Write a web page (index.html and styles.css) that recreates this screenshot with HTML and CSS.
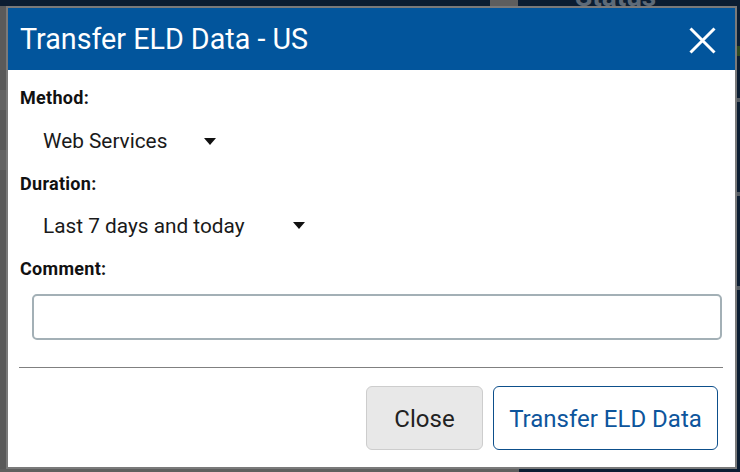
FILE: index.html
```html
<!DOCTYPE html>
<html lang="en">
<head>
<meta charset="utf-8">
<title>Transfer ELD Data - US</title>
<link rel="stylesheet" href="styles.css">
</head>
<body>
<div class="app">
  <div class="app-top">
    <span class="app-top-btn"></span>
    <span class="app-top-title">Status</span>
  </div>
  <div class="app-main">
    <div class="app-left">
      <div class="app-left-row"></div>
      <div class="app-left-row"></div>
    </div>
    <div class="app-right">
      <div class="app-right-line green"></div>
      <div class="app-right-line"></div>
      <div class="app-right-line"></div>
      <div class="app-right-line"></div>
    </div>
  </div>
  <div class="app-bottom">
    <div class="app-bottom-left"></div>
    <div class="app-bottom-right"></div>
  </div>
</div>

<div class="modal" role="dialog" aria-label="Transfer ELD Data - US">
  <div class="modal-header">
    <h1 class="modal-title">Transfer ELD Data - US</h1>
    <button class="modal-x" aria-label="Close">
      <svg width="27" height="27" viewBox="0 0 27 27"><path d="M1.5 1.5 L25.5 25.5 M25.5 1.5 L1.5 25.5" stroke="#fff" stroke-width="3" fill="none"/></svg>
    </button>
  </div>
  <div class="modal-body">
    <div class="field-label">Method:</div>
    <div class="select-row">
      <span class="select-value">Web Services</span>
      <span class="caret caret-method"></span>
    </div>
    <div class="field-label">Duration:</div>
    <div class="select-row select-row-2">
      <span class="select-value">Last 7 days and today</span>
      <span class="caret caret-duration"></span>
    </div>
    <div class="field-label">Comment:</div>
    <input class="comment-input" type="text">
    <hr class="divider">
    <div class="actions">
      <button class="btn btn-close">Close</button>
      <button class="btn btn-primary">Transfer ELD Data</button>
    </div>
  </div>
</div>
</body>
</html>
```
FILE: styles.css
```css
* { box-sizing: border-box; }
html, body {
  margin: 0;
  padding: 0;
  width: 740px;
  height: 472px;
  overflow: hidden;
  font-family: Roboto, "Liberation Sans", Arial, sans-serif;
  background: #0b1d32;
}

/* dimmed application behind the dialog */
.app {
  display: flex;
  flex-direction: column;
  width: 740px;
  height: 472px;
}
.app-top {
  height: 6px;
  background: #0b1d32;
  position: relative;
  overflow: hidden;
}
.app-top-btn {
  position: absolute;
  left: 490px;
  top: 0;
  width: 28px;
  height: 6px;
  background: #5e5e5e;
}
.app-top-title {
  position: absolute;
  left: 575px;
  top: -20px;
  font-size: 28px;
  font-weight: 700;
  color: #5d6a78;
}
.app-main {
  flex: 1;
  display: flex;
}
.app-left {
  width: 520px;
  background: #5a5a5a;
  display: flex;
  flex-direction: column;
  padding-top: 84px;
  gap: 40px;
}
.app-left-row {
  height: 20px;
  background: #626262;
}
.app-right {
  flex: 1;
  background: #0b1d32;
  display: flex;
  flex-direction: column;
  padding-top: 40px;
}
.app-right-line {
  height: 4px;
  background: #555c63;
  margin-bottom: 90px;
}
.app-right-line.green {
  height: 10px;
  background: #2f4a22;
  margin-bottom: 42px;
}
.app-bottom {
  height: 3px;
  display: flex;
}
.app-bottom-left { width: 519px; background: #5f5f5f; }
.app-bottom-right { flex: 1; background: #0b1d32; }

/* dialog */
.modal {
  position: absolute;
  left: 6px;
  top: 6px;
  width: 731px;
  height: 463px;
  border: 2px solid #7a7a7a;
  background: #fff;
  display: flex;
  flex-direction: column;
}
.modal-header {
  height: 62px;
  background: #02559c;
  display: flex;
  align-items: center;
  justify-content: space-between;
  padding: 0 19px 0 12px;
}
.modal-title {
  margin: 0;
  font-size: 28.7px;
  font-weight: 400;
  color: #fff;
  line-height: 34px;
}
.modal-x {
  border: 0;
  background: transparent;
  padding: 0;
  width: 27px;
  height: 27px;
  display: block;
  margin-top: 2px;
}
.modal-x svg { display: block; }

.modal-body {
  flex: 1;
  display: flex;
  flex-direction: column;
  padding: 18px 12px 17px 11px;
}
.field-label {
  font-size: 18px;
  font-weight: 700;
  line-height: 20px;
  letter-spacing: 0.3px;
  color: #111;
  padding-left: 1px;
}
.select-row {
  height: 66px;
  display: flex;
  align-items: center;
  padding-left: 24px;
}
.select-row-2 { height: 65px; padding-bottom: 2px; }
.select-value {
  font-size: 20.8px;
  line-height: 24px;
  color: #1a1a1a;
}
.caret {
  width: 0;
  height: 0;
  border-left: 6.5px solid transparent;
  border-right: 6.5px solid transparent;
  border-top: 7px solid #111;
}
.caret-method { margin-left: 37px; }
.caret-duration { margin-left: 48px; }

.comment-input {
  margin: 15px 1px 0 13px;
  height: 46px;
  flex: none;
  border: 2px solid #a3b0b6;
  border-radius: 5px;
  background: #fff;
  font-size: 18px;
  font-family: inherit;
  padding: 0 10px;
}
.divider {
  margin: 27px 0 0 0;
  border: 0;
  border-top: 1px solid #808080;
  height: 0;
}
.actions {
  margin-top: 18px;
  display: flex;
  justify-content: flex-end;
  gap: 10px;
  padding-right: 5px;
}
.btn {
  height: 64px;
  font-family: inherit;
  font-size: 24px;
  border-radius: 6px;
  padding: 2px 0 0 0;
  cursor: pointer;
}
.btn-close {
  width: 117px;
  background: #e8e8e8;
  border: 1px solid #cdcdcd;
  color: #222;
}
.btn-primary {
  width: 225px;
  background: #fff;
  border: 1px solid #0d4f8b;
  color: #0d559c;
}
```
